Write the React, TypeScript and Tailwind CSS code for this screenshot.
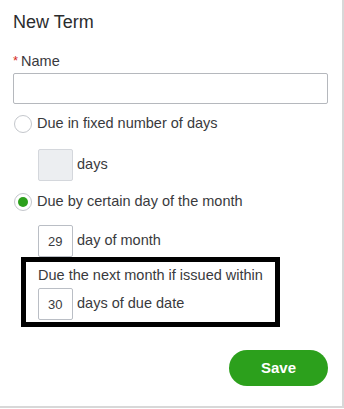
import React from "react";

const font = { fontFamily: '"Liberation Sans", Arial, sans-serif' };

function Radio({ checked }: { checked?: boolean }) {
  return (
    <span className="ml-[1px] flex h-[18px] w-[18px] shrink-0 items-center justify-center rounded-full border border-[#c4c7cc] bg-white">
      {checked && <span className="h-[10px] w-[10px] rounded-full bg-[#2ca01c]" />}
    </span>
  );
}

function NumBox({ value, disabled }: { value?: string; disabled?: boolean }) {
  return (
    <div
      className={
        disabled
          ? "h-[32px] w-[35px] shrink-0 rounded-[2px] border border-[#d4d7dc] bg-[#eceef1]"
          : "flex h-[32px] w-[35px] shrink-0 items-center rounded-[2px] border border-[#babec5] bg-white pl-[9px] pt-[1px] text-[13px] text-[#393a3d]"
      }
    >
      {value}
    </div>
  );
}

export default function App() {
  return (
    <div style={font} className="h-[409px] w-[344px] bg-white">
      <div className="flex h-[408px] w-[344px] flex-col border-b-2 border-r-2 border-[#d8d8d8] pl-[13px] pr-[14px] text-[#393a3d]">
        <h2 className="mt-[10px] text-[18px] leading-[24px] text-[#2b2c2e]">New Term</h2>
        <div className="mt-[17px] flex text-[14.5px] leading-[20px]">
          <span className="mr-[3px] text-[13px] text-[#d52b1e]">*</span>
          <span>Name</span>
        </div>
        <input className="mt-[2px] h-[31px] w-[315px] rounded-[2px] border border-[#b5b8bd] outline-none" />
        <div className="mt-[11px] flex h-[18px] items-center gap-[5px] text-[14.5px] leading-[20px]">
          <Radio />
          <span className="-mt-[3px]">Due in fixed number of days</span>
        </div>
        <div className="ml-[25px] mt-[16px] flex items-center gap-[4px] text-[14.5px] leading-[20px]">
          <NumBox disabled />
          <span className="-mt-[3px]">days</span>
        </div>
        <div className="mt-[12px] flex h-[18px] items-center gap-[5px] text-[14.5px] leading-[20px]">
          <Radio checked />
          <span className="-mt-[3px]">Due by certain day of the month</span>
        </div>
        <div className="ml-[25px] mt-[14px] flex items-center gap-[4px] text-[14.5px] leading-[20px]">
          <NumBox value="29" />
          <span className="-mt-[3px]">day of month</span>
        </div>
        <div className="ml-[8px] flex h-[70px] w-[259px] flex-col border-[5px] border-black pl-[12px] pt-[3px] text-[14.5px] leading-[20px]">
          <span className="whitespace-nowrap">Due the next month if issued within</span>
          <div className="mt-[3px] flex items-center gap-[4px]">
            <NumBox value="30" />
            <span className="-mt-[3px]">days of due date</span>
          </div>
        </div>
        <button className="mt-[23px] flex h-[36px] w-[99px] items-center justify-center self-end rounded-full bg-[#2ca01c] text-[15px] font-bold text-white">
          Save
        </button>
      </div>
    </div>
  );
}
